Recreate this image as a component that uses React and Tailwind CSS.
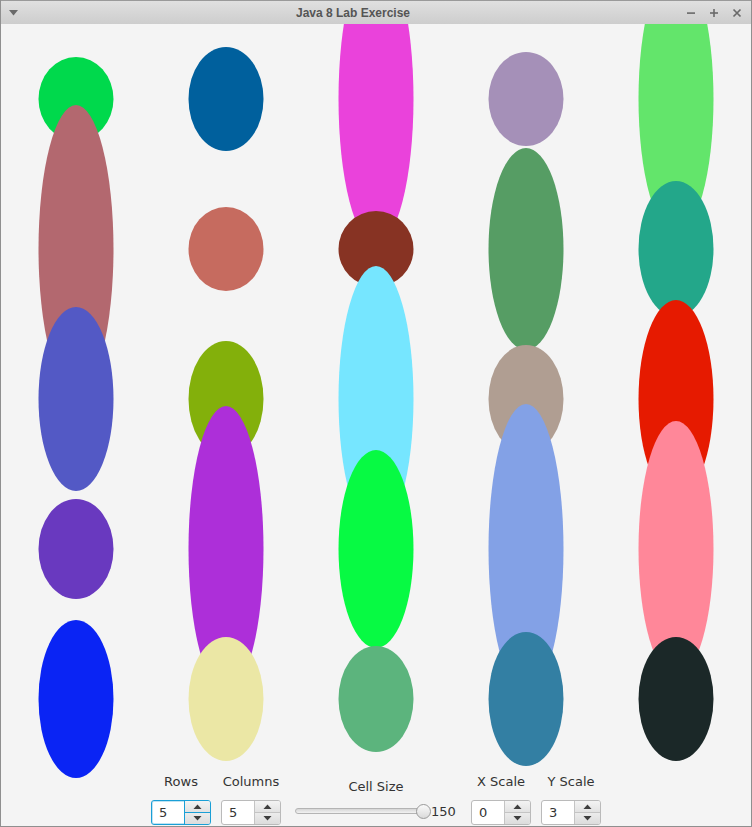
import React from "react";

const COLORS = [
  ["#00d94c", "#00609d", "#ea42db", "#a590b8", "#63e56b"],
  ["#b3686f", "#c66b5f", "#873323", "#569d64", "#23a78a"],
  ["#5359c5", "#83b00b", "#76e6ff", "#b09e92", "#e61a00"],
  ["#6939bf", "#ad2fd9", "#07fa43", "#83a1e6", "#ff8799"],
  ["#0a24f4", "#ebe7a5", "#5cb47d", "#337fa3", "#1b2828"],
];

const RY = [
  [42, 52, 145, 47, 135],
  [144, 42, 38, 101, 68],
  [92, 58, 133, 54, 99],
  [50, 143, 99, 145, 128],
  [79, 62, 53, 67, 62],
];

function Arrow({ up }) {
  return (
    <svg width="9" height="5" viewBox="0 0 9 5">
      {up ? (
        <polygon points="0.5,5 4.5,0.5 8.5,5" fill="#3d3d3d" />
      ) : (
        <polygon points="0.5,0 4.5,4.5 8.5,0" fill="#3d3d3d" />
      )}
    </svg>
  );
}

function Spinner({ value, focused }) {
  return (
    <div
      className={
        focused
          ? "flex h-[25px] w-[60px] overflow-hidden rounded-[3px] border border-[#1a9fd6] bg-white shadow-[inset_0_0_0_1px_#bfe3f3]"
          : "flex h-[25px] w-[60px] overflow-hidden rounded-[3px] border border-[#bababa] bg-white"
      }
    >
      <div className="flex flex-1 items-center pl-[7px] text-[13px] leading-none text-[#333333]">
        {value}
      </div>
      <div
        className={
          focused
            ? "flex w-[26px] flex-col border-l border-[#1a9fd6]"
            : "flex w-[26px] flex-col border-l border-[#c4c4c4]"
        }
      >
        <div className="flex flex-1 items-center justify-center bg-gradient-to-b from-[#f3f3f3] to-[#e2e2e2]">
          <Arrow up />
        </div>
        <div className={focused ? "h-px bg-[#1a9fd6]" : "h-px bg-[#c4c4c4]"} />
        <div className="flex flex-1 items-center justify-center bg-gradient-to-b from-[#ececec] to-[#dcdcdc]">
          <Arrow />
        </div>
      </div>
    </div>
  );
}

function SpinCol({ label, value, focused }) {
  return (
    <div className="flex w-[60px] flex-col items-center">
      <div className="h-[16px] whitespace-nowrap text-[13px] leading-[16px] text-[#333333]">
        {label}
      </div>
      <div className="mt-[10px]">
        <Spinner value={value} focused={focused} />
      </div>
    </div>
  );
}

export default function App() {
  const ellipses = [];
  for (let r = 0; r < 5; r++) {
    for (let c = 0; c < 5; c++) {
      ellipses.push(
        <ellipse
          key={r + "-" + c}
          cx={75 + 150 * c}
          cy={75 + 150 * r}
          rx={37.5}
          ry={RY[r][c]}
          fill={COLORS[r][c]}
        />
      );
    }
  }

  return (
    <div
      className="flex h-[827px] w-[752px] flex-col border-x border-b border-[#8f8f8f] bg-[#f4f4f4]"
      style={{ fontFamily: '"DejaVu Sans", "Liberation Sans", sans-serif' }}
    >
      {/* Title bar */}
      <div className="flex h-[24px] shrink-0 items-center border-t border-[#9a9a9a] bg-gradient-to-b from-[#e0e0e0] to-[#cdcdcd]">
        <div className="flex w-[22px] items-center justify-center pl-[3px]">
          <svg width="9" height="6" viewBox="0 0 9 6">
            <polygon points="0,0 9,0 4.5,5.5" fill="#6a6a6a" />
          </svg>
        </div>
        <div
          className="flex-1 text-center text-[12px] font-bold leading-none text-[#555555]"
          style={{ fontFamily: '"Liberation Sans", Arial, sans-serif' }}
        >
          Java 8 Lab Exercise
        </div>
        <div className="flex w-[68px] items-center justify-between pl-[3px] pr-[9px]">
          <svg width="10" height="10" viewBox="0 0 10 10">
            <rect x="1" y="4.3" width="8" height="1.6" fill="#6a6a6a" />
          </svg>
          <svg width="10" height="10" viewBox="0 0 10 10">
            <rect x="1" y="4.2" width="8" height="1.6" fill="#6a6a6a" />
            <rect x="4.2" y="1" width="1.6" height="8" fill="#6a6a6a" />
          </svg>
          <svg width="10" height="10" viewBox="0 0 10 10">
            <path d="M1.5 1.5 L8.5 8.5 M8.5 1.5 L1.5 8.5" stroke="#6a6a6a" strokeWidth="1.7" />
          </svg>
        </div>
      </div>

      {/* Content */}
      <div className="flex flex-1 flex-col overflow-hidden">
        <svg
          width="750"
          height="750"
          viewBox="0 0 750 750"
          className="block shrink-0 overflow-visible"
        >
          {ellipses}
        </svg>

        <div className="flex h-[52px] shrink-0 justify-center gap-[10px]">
          <SpinCol label="Rows" value="5" focused />
          <SpinCol label="Columns" value="5" />
          <div className="flex w-[170px] flex-col items-center">
            <div className="mt-[5px] h-[16px] text-[13px] leading-[16px] text-[#333333]">
              Cell Size
            </div>
            <div className="mt-[5px] flex h-[22px] w-full items-center pl-[4px]">
              <div className="relative h-[22px] w-[136px]">
                <div className="absolute left-0 right-[4px] top-[8px] h-[6px] rounded-full border border-[#b4b4b4] bg-gradient-to-b from-[#d6d6d6] to-[#f2f2f2]" />
                <div className="absolute right-0 top-[4px] h-[15px] w-[15px] rounded-full border border-[#9a9a9a] bg-gradient-to-b from-[#fafafa] to-[#dadada]" />
              </div>
              <div className="text-[13px] leading-none text-[#333333]">150</div>
            </div>
          </div>
          <SpinCol label="X Scale" value="0" />
          <SpinCol label="Y Scale" value="3" />
        </div>
      </div>
    </div>
  );
}
